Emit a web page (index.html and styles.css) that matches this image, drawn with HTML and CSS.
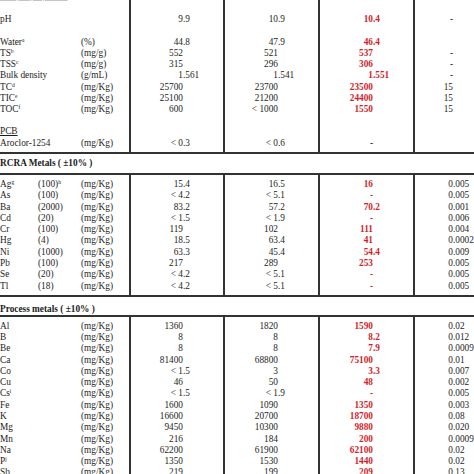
FILE: index.html
```html
<!DOCTYPE html>
<html>
<head>
<meta charset="utf-8">
<link rel="stylesheet" href="styles.css">
</head>
<body>
<table class="data">
<colgroup>
<col class="c-a"><col class="c-b"><col class="c-c"><col class="c-d"><col class="c-e"><col class="c-f"><col class="c-g">
</colgroup>
<tbody class="sec s1">
<tr class="r0"><td colspan="3"><span class="caption">Sample properties</span></td><td class="d"></td><td class="e"></td><td class="f"></td><td class="g"></td></tr>
<tr class="r1"><td colspan="3"></td><td class="d"></td><td class="e"></td><td class="f"></td><td class="g"></td></tr>
<tr><td colspan="3">pH</td><td class="d"><span class="i">9</span>.9</td><td class="e"><span class="i">10</span>.9</td><td class="f"><span class="i">10</span>.4</td><td class="g"><span class="i">-</span></td></tr>
<tr><td colspan="3"></td><td class="d"></td><td class="e"></td><td class="f"></td><td class="g"></td></tr>
<tr><td colspan="2">Water<sup>a</sup></td><td>(%)</td><td class="d"><span class="i">44</span>.8</td><td class="e"><span class="i">47</span>.9</td><td class="f"><span class="i">46</span>.4</td><td class="g"></td></tr>
<tr><td colspan="2">TS<sup>b</sup></td><td>(mg/g)</td><td class="d"><span class="i">552</span></td><td class="e"><span class="i">521</span></td><td class="f"><span class="i">537</span></td><td class="g"><span class="i">-</span></td></tr>
<tr><td colspan="2">TSS<sup>c</sup></td><td>(mg/g)</td><td class="d"><span class="i">315</span></td><td class="e"><span class="i">296</span></td><td class="f"><span class="i">306</span></td><td class="g"><span class="i">-</span></td></tr>
<tr><td colspan="2">Bulk density</td><td>(g/mL)</td><td class="d"><span class="i">1</span>.561</td><td class="e"><span class="i">1</span>.541</td><td class="f"><span class="i">1</span>.551</td><td class="g"><span class="i">-</span></td></tr>
<tr><td colspan="2">TC<sup>d</sup></td><td>(mg/Kg)</td><td class="d"><span class="i">25700</span></td><td class="e"><span class="i">23700</span></td><td class="f"><span class="i">23500</span></td><td class="g"><span class="i">15</span></td></tr>
<tr><td colspan="2">TIC<sup>e</sup></td><td>(mg/Kg)</td><td class="d"><span class="i">25100</span></td><td class="e"><span class="i">21200</span></td><td class="f"><span class="i">24400</span></td><td class="g"><span class="i">15</span></td></tr>
<tr><td colspan="2">TOC<sup>f</sup></td><td>(mg/Kg)</td><td class="d"><span class="i">600</span></td><td class="e"><span class="i">&lt; 1000</span></td><td class="f"><span class="i">1550</span></td><td class="g"><span class="i">15</span></td></tr>
<tr><td colspan="3"></td><td class="d"></td><td class="e"></td><td class="f"></td><td class="g"></td></tr>
<tr><td colspan="3"><span class="ul">PCB</span></td><td class="d"></td><td class="e"></td><td class="f"></td><td class="g"></td></tr>
<tr><td colspan="2">Aroclor-1254</td><td>(mg/Kg)</td><td class="d"><span class="i">&lt; 0</span>.3</td><td class="e"><span class="i">&lt; 0</span>.6</td><td class="f dark"><span class="i">-</span></td><td class="g"></td></tr>
<tr class="pad pad-a"><td colspan="3"></td><td class="d"></td><td class="e"></td><td class="f"></td><td class="g"></td></tr>
</tbody>
<tbody class="head h1">
<tr><td colspan="7">RCRA Metals ( ±10% )</td></tr>
</tbody>
<tbody class="sec s2">
<tr class="pad pad-b"><td colspan="3"></td><td class="d"></td><td class="e"></td><td class="f"></td><td class="g"></td></tr>
<tr><td>Ag<sup>g</sup></td><td>(100)<sup>h</sup></td><td>(mg/Kg)</td><td class="d"><span class="i">15</span>.4</td><td class="e"><span class="i">16</span>.5</td><td class="f"><span class="i">16</span></td><td class="g"><span class="i">0</span>.005</td></tr>
<tr><td>As</td><td>(100)</td><td>(mg/Kg)</td><td class="d"><span class="i">&lt; 4</span>.2</td><td class="e"><span class="i">&lt; 5</span>.1</td><td class="f"><span class="i">-</span></td><td class="g"><span class="i">0</span>.005</td></tr>
<tr><td>Ba</td><td>(2000)</td><td>(mg/Kg)</td><td class="d"><span class="i">83</span>.2</td><td class="e"><span class="i">57</span>.2</td><td class="f"><span class="i">70</span>.2</td><td class="g"><span class="i">0</span>.001</td></tr>
<tr><td>Cd</td><td>(20)</td><td>(mg/Kg)</td><td class="d"><span class="i">&lt; 1</span>.5</td><td class="e"><span class="i">&lt; 1</span>.9</td><td class="f"><span class="i">-</span></td><td class="g"><span class="i">0</span>.006</td></tr>
<tr><td>Cr</td><td>(100)</td><td>(mg/Kg)</td><td class="d"><span class="i">119</span></td><td class="e"><span class="i">102</span></td><td class="f"><span class="i">111</span></td><td class="g"><span class="i">0</span>.004</td></tr>
<tr><td>Hg</td><td>(4)</td><td>(mg/Kg)</td><td class="d"><span class="i">18</span>.5</td><td class="e"><span class="i">63</span>.4</td><td class="f"><span class="i">41</span></td><td class="g"><span class="i">0</span>.0002</td></tr>
<tr><td>Ni</td><td>(1000)</td><td>(mg/Kg)</td><td class="d"><span class="i">63</span>.3</td><td class="e"><span class="i">45</span>.4</td><td class="f"><span class="i">54</span>.4</td><td class="g"><span class="i">0</span>.009</td></tr>
<tr><td>Pb</td><td>(100)</td><td>(mg/Kg)</td><td class="d"><span class="i">217</span></td><td class="e"><span class="i">289</span></td><td class="f"><span class="i">253</span></td><td class="g"><span class="i">0</span>.005</td></tr>
<tr><td>Se</td><td>(20)</td><td>(mg/Kg)</td><td class="d"><span class="i">&lt; 4</span>.2</td><td class="e"><span class="i">&lt; 5</span>.1</td><td class="f"><span class="i">-</span></td><td class="g"><span class="i">0</span>.005</td></tr>
<tr><td>Tl</td><td>(18)</td><td>(mg/Kg)</td><td class="d"><span class="i">&lt; 4</span>.2</td><td class="e"><span class="i">&lt; 5</span>.1</td><td class="f"><span class="i">-</span></td><td class="g"><span class="i">0</span>.005</td></tr>
<tr class="pad pad-c"><td colspan="3"></td><td class="d"></td><td class="e"></td><td class="f"></td><td class="g"></td></tr>
</tbody>
<tbody class="head h2">
<tr><td colspan="7">Process metals ( ±10% )</td></tr>
</tbody>
<tbody class="sec s3">
<tr class="pad pad-d"><td colspan="3"></td><td class="d"></td><td class="e"></td><td class="f"></td><td class="g"></td></tr>
<tr><td colspan="2">Al</td><td>(mg/Kg)</td><td class="d"><span class="i">1360</span></td><td class="e"><span class="i">1820</span></td><td class="f"><span class="i">1590</span></td><td class="g"><span class="i">0</span>.02</td></tr>
<tr><td colspan="2">B</td><td>(mg/Kg)</td><td class="d"><span class="i">8</span></td><td class="e"><span class="i">8</span></td><td class="f"><span class="i">8</span>.2</td><td class="g"><span class="i">0</span>.012</td></tr>
<tr><td colspan="2">Be</td><td>(mg/Kg)</td><td class="d"><span class="i">8</span></td><td class="e"><span class="i">8</span></td><td class="f"><span class="i">7</span>.9</td><td class="g"><span class="i">0</span>.0009</td></tr>
<tr><td colspan="2">Ca</td><td>(mg/Kg)</td><td class="d"><span class="i">81400</span></td><td class="e"><span class="i">68800</span></td><td class="f"><span class="i">75100</span></td><td class="g"><span class="i">0</span>.01</td></tr>
<tr><td colspan="2">Co</td><td>(mg/Kg)</td><td class="d"><span class="i">&lt; 1</span>.5</td><td class="e"><span class="i">3</span></td><td class="f"><span class="i">3</span>.3</td><td class="g"><span class="i">0</span>.007</td></tr>
<tr><td colspan="2">Cu</td><td>(mg/Kg)</td><td class="d"><span class="i">46</span></td><td class="e"><span class="i">50</span></td><td class="f"><span class="i">48</span></td><td class="g"><span class="i">0</span>.002</td></tr>
<tr><td colspan="2">Cs<sup>i</sup></td><td>(mg/Kg)</td><td class="d"><span class="i">&lt; 1</span>.5</td><td class="e"><span class="i">&lt; 1</span>.9</td><td class="f"><span class="i">-</span></td><td class="g"><span class="i">0</span>.005</td></tr>
<tr><td colspan="2">Fe</td><td>(mg/Kg)</td><td class="d"><span class="i">1600</span></td><td class="e"><span class="i">1090</span></td><td class="f"><span class="i">1350</span></td><td class="g"><span class="i">0</span>.003</td></tr>
<tr><td colspan="2">K</td><td>(mg/Kg)</td><td class="d"><span class="i">16600</span></td><td class="e"><span class="i">20700</span></td><td class="f"><span class="i">18700</span></td><td class="g"><span class="i">0</span>.08</td></tr>
<tr><td colspan="2">Mg</td><td>(mg/Kg)</td><td class="d"><span class="i">9450</span></td><td class="e"><span class="i">10300</span></td><td class="f"><span class="i">9880</span></td><td class="g"><span class="i">0</span>.020</td></tr>
<tr><td colspan="2">Mn</td><td>(mg/Kg)</td><td class="d"><span class="i">216</span></td><td class="e"><span class="i">184</span></td><td class="f"><span class="i">200</span></td><td class="g"><span class="i">0</span>.0009</td></tr>
<tr><td colspan="2">Na</td><td>(mg/Kg)</td><td class="d"><span class="i">62200</span></td><td class="e"><span class="i">61900</span></td><td class="f"><span class="i">62100</span></td><td class="g"><span class="i">0</span>.02</td></tr>
<tr><td colspan="2">P<sup>j</sup></td><td>(mg/Kg)</td><td class="d"><span class="i">1350</span></td><td class="e"><span class="i">1530</span></td><td class="f"><span class="i">1440</span></td><td class="g"><span class="i">0</span>.02</td></tr>
<tr><td colspan="2">Sb</td><td>(mg/Kg)</td><td class="d"><span class="i">219</span></td><td class="e"><span class="i">199</span></td><td class="f"><span class="i">209</span></td><td class="g"><span class="i">0</span>.13</td></tr>
<tr><td colspan="2">Se</td><td>(mg/Kg)</td><td class="d"><span class="i">&lt; 4</span>.2</td><td class="e"><span class="i">&lt; 5</span>.1</td><td class="f"><span class="i">-</span></td><td class="g"><span class="i">0</span>.005</td></tr>
</tbody>
</table>
</body>
</html>
```
FILE: styles.css
```css
html, body {
  margin: 0;
  padding: 0;
  background: #ffffff;
  overflow: hidden;
}

body {
  width: 474px;
  height: 474px;
  font-family: "Liberation Serif", "Times New Roman", serif;
  font-size: 9.3px;
  color: #1c1c1c;
}

.data {
  border-collapse: collapse;
  table-layout: fixed;
  width: 474px;
  margin-top: -9.5px;
}

.c-a { width: 38px; }
.c-b { width: 43px; }
.c-c { width: 49px; }
.c-d { width: 94px; }
.c-e { width: 95px; }
.c-f { width: 95px; }
.c-g { width: 60px; }

.data td {
  padding: 0;
  white-space: nowrap;
  overflow: visible;
  vertical-align: middle;
  text-align: left;
}

.s1 td { height: 11.2px; line-height: 11.2px; }
.s2 td { height: 11.3px; line-height: 11.3px; }
.s3 td { height: 11.3px; line-height: 11.3px; }

.s1 .r1 td { height: 12.7px; line-height: 12.7px; }

.data td.d,
.data td.e,
.data td.f,
.data td.g {
  border-left: 2px solid #333333;
}

.data .pad td {
  font-size: 0;
  line-height: 0;
}
.data .pad-a td { height: 2.8px; }
.data .pad-b td { height: 4.4px; }
.data .pad-c td { height: 2.6px; }
.data .pad-d td { height: 3.4px; }

.i {
  display: inline-block;
  text-align: right;
}
.d .i { width: 52px; }
.e .i { width: 53px; }
.f .i { width: 53px; }
.g .i { width: 38px; }

.f {
  color: #d01f2c;
  font-weight: bold;
}
.f.dark {
  color: #333333;
}

sup {
  font-size: 5.5px;
  line-height: 0;
  vertical-align: 3.5px;
}

.ul {
  text-decoration: underline;
}

.caption {
  color: #c4c4c4;
  text-decoration: underline;
}

.head td {
  border-top: 2px solid #333333;
  border-bottom: 2px solid #333333;
  font-weight: bold;
  line-height: 11.2px;
  height: 11.2px;
}
.h1 td {
  padding: 4.4px 0 3.4px 0;
}
.h2 td {
  padding: 7.5px 0 0 0;
}
```
